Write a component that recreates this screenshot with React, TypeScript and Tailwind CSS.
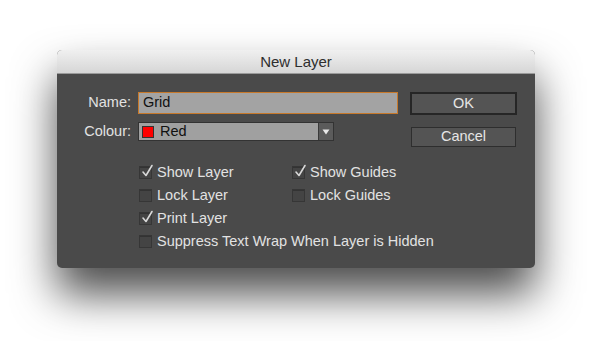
import React from "react";

const font = { fontFamily: '"Liberation Sans", Arial, sans-serif' };

function Check({ checked, label }: { checked?: boolean; label: string }) {
  return (
    <div className="flex items-center h-[23px]">
      <div className="relative w-[13px] h-[13px] bg-[#444] border border-[#363636] shadow-[inset_0_1px_0_rgba(0,0,0,0.25)]">
        {checked && (
          <svg
            className="absolute left-[1px] top-[-3px]"
            width="13"
            height="14"
            viewBox="0 0 13 14"
            fill="none"
          >
            <path
              d="M2 8 L5 11.5 L11 1.5"
              stroke="#d8d8d8"
              strokeWidth="1.6"
              strokeLinecap="round"
              strokeLinejoin="round"
            />
          </svg>
        )}
      </div>
      <span className="ml-[5px] text-[14.5px] text-[#e2e2e2]">{label}</span>
    </div>
  );
}

export default function App() {
  return (
    <div
      className="w-[600px] h-[341px] bg-white pt-[50px] pl-[57px] overflow-hidden"
      style={font}
    >
      <div className="w-[478px] h-[218px] rounded-[5px] bg-[#4a4a4a] shadow-[0_26px_44px_rgba(0,0,0,0.7)] overflow-hidden">
        {/* Title bar */}
        <div className="h-[24px] flex items-center justify-center bg-gradient-to-b from-[#f0f0f0] to-[#d6d6d6] border-b border-[#9a9a9a] text-[15px] text-[#2e2e2e] pt-[1px]">
          New Layer
        </div>

        {/* Body */}
        <div className="flex pt-[18px]">
          <div className="flex flex-col">
            <div className="flex items-center h-[22px]">
              <span className="w-[74px] text-right text-[14.5px] text-[#e2e2e2]">Name:</span>
              <div className="ml-[7px] w-[260px] h-[22px] border border-[#c7792b] bg-[#a3a3a3] flex items-center px-[4px] text-[14.5px] text-[#111]">
                Grid
              </div>
            </div>
            <div className="flex items-center h-[19px] mt-[8px]">
              <span className="w-[74px] text-right text-[14.5px] text-[#e2e2e2]">Colour:</span>
              <div className="ml-[7px] w-[196px] h-[19px] border border-[#333] bg-[#a0a0a0] flex items-center">
                <div className="ml-[3px] w-[12px] h-[12px] bg-[#ff0000] border border-[#333]" />
                <span className="ml-[6px] text-[14.5px] text-[#111] flex-1">Red</span>
                <div className="w-[15px] h-full bg-[#5b5b5b] border-l border-[#3a3a3a] flex items-center justify-center">
                  <svg width="8" height="6" viewBox="0 0 8 6">
                    <path d="M0.5 0.5 H7.5 L4 5.5 Z" fill="#e8e8e8" />
                  </svg>
                </div>
              </div>
            </div>
          </div>

          <div className="flex flex-col ml-[12px]">
            <div className="w-[107px] h-[23px] border-2 border-[#262626] bg-[#545454] flex items-center justify-center text-[14.5px] text-[#e6e6e6]">
              OK
            </div>
            <div className="ml-[1px] mt-[12px] w-[105px] h-[20px] border border-[#2e2e2e] bg-[#545454] flex items-center justify-center text-[14.5px] text-[#e6e6e6]">
              Cancel
            </div>
          </div>
        </div>

        <div className="pl-[82px] mt-[14px]">
          <div className="grid grid-cols-[153px_1fr]">
            <Check checked label="Show Layer" />
            <Check checked label="Show Guides" />
            <Check label="Lock Layer" />
            <Check label="Lock Guides" />
            <Check checked label="Print Layer" />
            <div />
          </div>
          <Check label="Suppress Text Wrap When Layer is Hidden" />
        </div>
      </div>
    </div>
  );
}
